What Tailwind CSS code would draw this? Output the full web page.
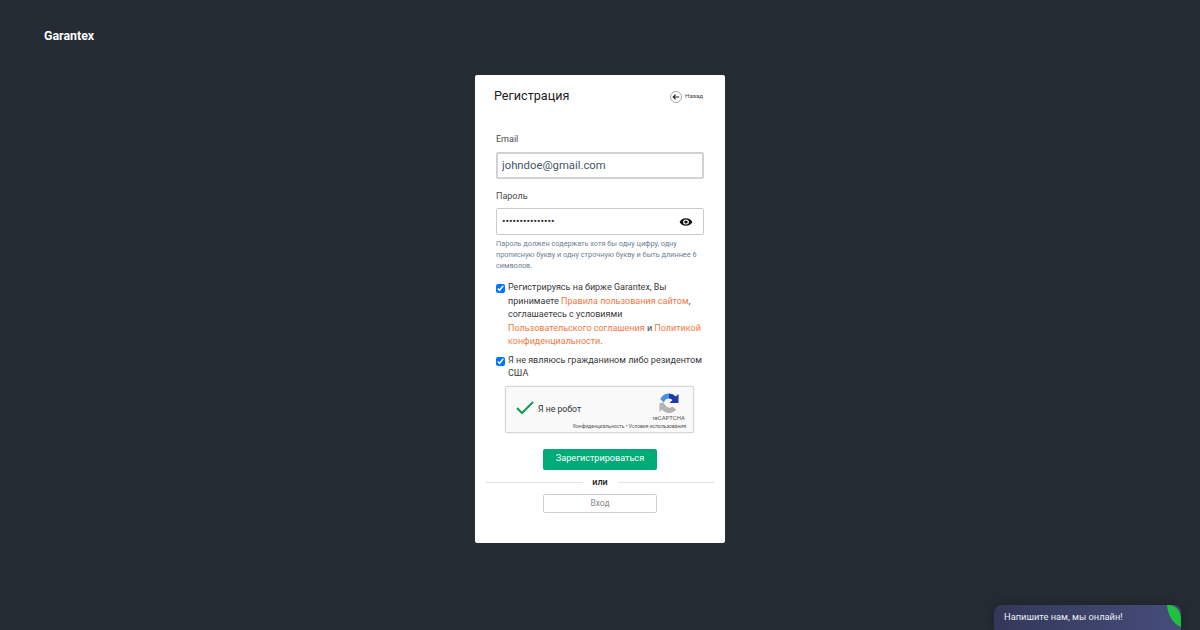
<!DOCTYPE html>
<html lang="en">
<head>
    <meta charset="UTF-8">
    <title>Garantex</title>
    <script src="https://cdn.jsdelivr.net/npm/@tailwindcss/browser@4"></script>
</head>
<body class="bg-[#252c33] font-['Roboto',sans-serif] h-[630px] overflow-hidden relative">

    <!-- Header -->
    <header class="h-[75px] pl-[44px] pt-[28px]">
        <a class="block text-white font-bold text-[12.4px] leading-[15px]">Garantex</a>
    </header>

    <!-- Register card -->
    <main class="w-[250px] h-[468px] mx-auto bg-white rounded-[2px] pt-[11px] px-[20px]">
        <div class="flex justify-between items-center h-[20px] pr-[2px]">
            <h1 class="-ml-[1px] text-[12.6px] font-normal text-[#222] leading-[18px]">Регистрация</h1>
            <a class="flex items-center gap-[3px] text-[6.2px] text-[#444] mt-[1px]">
                <span class="w-[12px] h-[12px] rounded-full border border-[#aaa] flex items-center justify-center">
                    <svg class="w-[8px] h-[8px]" viewBox="0 0 10 10" fill="none" stroke="#222" stroke-width="1.4"><path d="M9 5H1.5M4.5 2L1.5 5l3 3"/></svg>
                </span>
                Назад
            </a>
        </div>

        <form class="mt-[27px] pl-[1px]">
            <label class="block text-[9px] leading-[12px] text-[#4a4a4a]">Email</label>
            <input type="text" value="johndoe@gmail.com" class="block mt-[7px] w-[208px] h-[27px] border-2 border-[#d2d2d2] rounded-[2px] px-[4px] text-[11.3px] text-[#44566c] outline-none">

            <label class="block mt-[11px] text-[9px] leading-[12px] text-[#4a4a4a]">Пароль</label>
            <div class="relative mt-[6px] w-[208px]">
                <input type="text" value="•••••••••••••••" class="block w-full h-[27px] border-[1.5px] border-[#cbcbcb] rounded-[2px] px-[5px] text-[10.4px] text-[#333] outline-none">
                <svg class="absolute right-[11px] top-[8px] w-[14px] h-[12px]" viewBox="0 0 24 24" fill="#111" preserveAspectRatio="none"><path d="M12 4.500C7 4.500 2.700 7.600 1 12c1.700 4.400 6 7.500 11 7.500s9.300-3.100 11-7.500c-1.700-4.400-6-7.500-11-7.500zM12 17a5 5 0 110-10 5 5 0 010 10zm0-8a3 3 0 100 6 3 3 0 000-6z"/></svg>
            </div>
            <p class="mt-[3px] w-[208px] text-[7.3px] leading-[11px] text-[#6d7f92]">Пароль должен содержать хотя бы одну цифру, одну прописную букву и одну строчную букву и быть длиннее 6 символов.</p>

            <div class="flex mt-[10px] w-[209px] gap-[3px]">
                <input type="checkbox" checked class="w-[9px] h-[9px] mt-[3px] shrink-0 accent-[#0075ff]">
                <p class="text-[9px] leading-[13.5px] text-[#3a3a3a]">Регистрируясь на бирже Garantex, Вы принимаете <a class="text-[#f2793f]">Правила пользования сайтом</a>, соглашаетесь с условиями <a class="text-[#f2793f]">Пользовательского соглашения</a> и <a class="text-[#f2793f]">Политикой</a> <a class="text-[#f2793f]">конфиденциальности</a>.</p>
            </div>
            <div class="flex mt-[5px] w-[209px] gap-[3px]">
                <input type="checkbox" checked class="w-[9px] h-[9px] mt-[3px] shrink-0 accent-[#0075ff]">
                <p class="text-[9px] leading-[13.5px] text-[#3a3a3a]">Я не являюсь гражданином либо резидентом США</p>
            </div>

            <!-- recaptcha -->
            <div class="relative ml-[9px] mt-[5px] w-[189px] h-[47px] bg-[#f9f9f9] border border-[#d6d6d6] rounded-[2px] shadow-[0_0_2px_rgba(0,0,0,0.12)]">
                <div class="flex items-center h-full pl-[10px] pb-[2px]">
                    <svg class="w-[18px] h-[14px]" viewBox="0 0 18 14" fill="none" stroke="#0f9d58" stroke-width="2"><path d="M1 7l5 5L17 1"/></svg>
                    <span class="ml-[4px] mt-[3px] text-[8.700px] text-[#333]">Я не робот</span>
                </div>
                <svg class="absolute right-[14px] top-[6px] w-[20px] h-[20px]" viewBox="0 0 20 20">
                    <path d="M10 0.500A9.500 9.500 0 001.300 6.200L5 9.500a5.200 5.200 0 015-4z" fill="#4a90e2"/>
                    <path d="M10 0.500a9.500 9.500 0 016.800 2.900L19.500 1v9h-9l3-3A5.200 5.200 0 0010 5.500z" fill="#1c3aa9"/>
                    <path d="M0.500 10l3 0 0-1.500 3.500 4.500c1.500 2 5 2.200 6.500 0.500l3.800 3.300A9.500 9.500 0 013 16.500L0.500 19z" fill="#b3b3b3"/>
                </svg>
                <span class="absolute right-[8px] top-[27px] text-[6px] leading-[8px] text-[#555]">reCAPTCHA</span>
                <span class="absolute right-[7px] top-[36px] text-[5px] leading-[7px] text-[#555]">Конфиденциальность • Условия использования</span>
            </div>
        </form>

        <button class="block mx-auto mt-[16px] w-[114px] h-[21px] bg-[#00ab78] rounded-[2px] text-white text-[9.100px] font-normal">Зарегистрироваться</button>

        <div class="flex items-center -mx-[9px] mt-[6px] h-[14px]">
            <span class="flex-1 h-px bg-[#e5e5e5]"></span>
            <span class="w-[35px] text-center text-[9px] font-medium text-[#222]">или</span>
            <span class="flex-1 h-px bg-[#e5e5e5]"></span>
        </div>

        <button class="block mx-auto mt-[4px] w-[114px] h-[19px] bg-white border border-[#d0d0d0] rounded-[2px] text-[#8a8a8a] text-[8.500px]">Вход</button>
    </main>

    <!-- Chat widget -->
    <div class="absolute left-[994px] top-[605px] w-[187px] h-[25px] rounded-t-[8px] bg-gradient-to-r from-[#33385a] to-[#474d7b] overflow-hidden shadow-[0_0_14px_rgba(0,0,0,0.25)]">
        <p class="pl-[10px] pt-[5px] text-[9.300px] leading-[14px] text-[#eceef5]">Напишите нам, мы онлайн!</p>
        <svg class="absolute right-0 top-0 w-[14px] h-[25px]" viewBox="0 0 14 25"><path d="M0 0C1 10 6 19 14 22V13C13 5 8 0 2 0Z" fill="#1fc23f"/></svg>
    </div>
</body>
</html>
